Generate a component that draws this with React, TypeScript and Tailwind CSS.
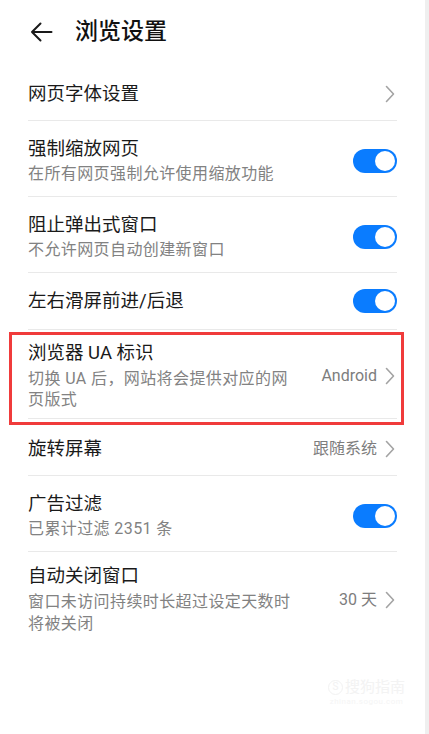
import React from 'react';

const font = { fontFamily: 'Roboto, "Noto Sans CJK SC", "Noto Sans", sans-serif' };

const Chevron = () => (
    <svg width="10" height="18" viewBox="0 0 10 18" fill="none" className="shrink-0">
        <path d="M1.5 1.5L8.5 9L1.5 16.5" stroke="#a3a3a3" strokeWidth="1.6" strokeLinecap="round" strokeLinejoin="round" />
    </svg>
);

const Toggle = () => (
    <div className="w-[44px] h-[24px] rounded-full bg-[#0a7cff] flex items-center justify-end pr-[2px] shrink-0">
        <div className="w-[20px] h-[20px] rounded-full bg-white"></div>
    </div>
);

const Value = ({ text }: { text: string }) => (
    <div className="flex items-center gap-[8px] shrink-0 pr-[2px]">
        <span className="text-[16px] leading-[22px] text-[#7d7d7d]">{text}</span>
        <Chevron />
    </div>
);

interface RowProps {
    title: string;
    sub?: string;
    right: React.ReactNode;
    className: string;
    subClass?: string;
    last?: boolean;
}

const Row: React.FC<RowProps> = ({ title, sub, right, className, subClass, last }) => (
    <div className={`flex items-center justify-between ${last ? '' : 'border-b border-[#e9e9e9]'} ${className}`}>
        <div className="flex flex-col">
            <span className="text-[18.5px] leading-[24px] text-[#1a1a1a]">{title}</span>
            {sub && (
                <span className={`text-[16px] tracking-[0.4px] text-[#828282] max-w-[268px] ${subClass ?? 'mt-[2px] leading-[22px]'}`}>
                    {sub}
                </span>
            )}
        </div>
        {right}
    </div>
);

export default function App() {
    return (
        <div className="flex w-[429px] h-[734px] bg-white overflow-hidden" style={font}>
            <div className="relative w-[425px] h-full">
                {/* Header */}
                <div className="h-[64px] flex items-center pl-[30px]">
                    <svg width="23" height="20" viewBox="0 0 23 20" fill="none">
                        <path d="M21.5 10H2M10.5 1.5L2 10L10.5 18.5" stroke="#1a1a1a" strokeWidth="2" strokeLinecap="round" strokeLinejoin="round" />
                    </svg>
                    <span className="ml-[22px] text-[23px] leading-[30px] font-medium text-[#111]">浏览设置</span>
                </div>

                <div className="mx-[28px]">
                    <Row title="网页字体设置" right={<Value text="" />} className="pt-[18px] pb-[14px]" />
                    <Row title="强制缩放网页" sub="在所有网页强制允许使用缩放功能" right={<Toggle />} className="pt-[16px] pb-[11px]" />
                    <Row title="阻止弹出式窗口" sub="不允许网页自动创建新窗口" right={<Toggle />} className="pt-[16px] pb-[11px]" />
                    <Row title="左右滑屏前进/后退" right={<Toggle />} className="pt-[16px] pb-[16px]" />
                    <Row
                        title="浏览器 UA 标识"
                        sub="切换 UA 后，网站将会提供对应的网页版式"
                        right={<Value text="Android" />}
                        className="pt-[11px] pb-[8px]"
                        subClass="mt-[3px] leading-[21px]"
                    />
                    <Row title="旋转屏幕" right={<Value text="跟随系统" />} className="pt-[18px] pb-[14px]" />
                    <Row title="广告过滤" sub="已累计过滤 2351 条" right={<Toggle />} className="pt-[16px] pb-[11px]" />
                    <Row
                        title="自动关闭窗口"
                        sub="窗口未访问持续时长超过设定天数时将被关闭"
                        right={<Value text="30 天" />}
                        className="pt-[12px] pb-[8px]"
                        subClass="mt-[3px] leading-[22px]"
                        last
                    />
                </div>

                {/* annotation frame */}
                <div className="absolute left-[9px] top-[332px] w-[395px] h-[93px] border-[3px] border-[#f03b3b] pointer-events-none"></div>

                {/* watermark */}
                <div className="absolute left-[328px] top-[677px] flex flex-col items-center opacity-50">
                    <div className="flex items-center gap-[2px]">
                        <div className="w-[15px] h-[15px] rounded-full border border-[#e6e6e6] flex items-center justify-center text-[10px] leading-none text-[#e6e6e6]">S</div>
                        <span className="text-[15px] leading-[20px] text-[#e8e8e8]">搜狗指南</span>
                    </div>
                    <span className="text-[8px] leading-[10px] tracking-[0.5px] text-[#ececec]">zhinan.sogou.com</span>
                </div>
            </div>
            <div className="w-[4px] h-full bg-[#efefef]"></div>
        </div>
    );
}
